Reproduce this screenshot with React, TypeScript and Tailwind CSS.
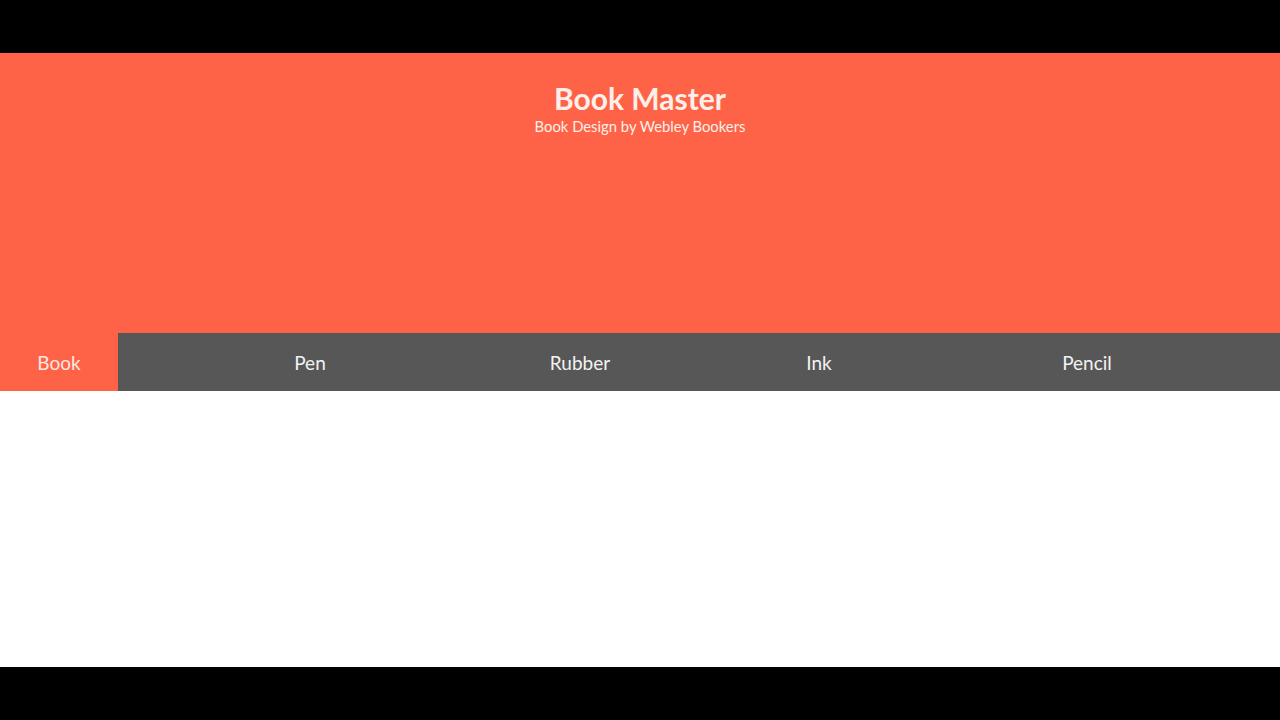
const items = [
  { label: 'Pen', w: 'w-[384px]' },
  { label: 'Rubber', w: 'w-[156px]' },
  { label: 'Ink', w: 'w-[322px]' },
  { label: 'Pencil', w: 'w-[214px]' },
]

export default function App() {
  return (
    <div className="h-[720px] flex flex-col bg-black font-['Lato',sans-serif]">
      <div className="h-[53px]" />
      <header className="h-[280px] bg-[#ff6347] text-[#fdf0ea] text-center pt-[26px]">
        <h1 className="text-[30px] font-bold leading-[38px]">Book Master</h1>
        <p className="text-[14.8px] leading-[18px]">Book Design by Webley Bookers</p>
      </header>
      <nav className="h-[58px] flex bg-[#575757] text-[19px] text-[#f2f2f2] pt-[2px]">
        <a className="w-[118px] -mt-[2px] pt-[2px] flex items-center justify-center bg-[#ff6347] text-[#fde9e2]">Book</a>
        {items.map((it) => (
          <a key={it.label} className={`${it.w} flex items-center justify-center`}>
            {it.label}
          </a>
        ))}
      </nav>
      <main className="h-[276px] bg-white" />
      <div className="flex-1" />
    </div>
  )
}
